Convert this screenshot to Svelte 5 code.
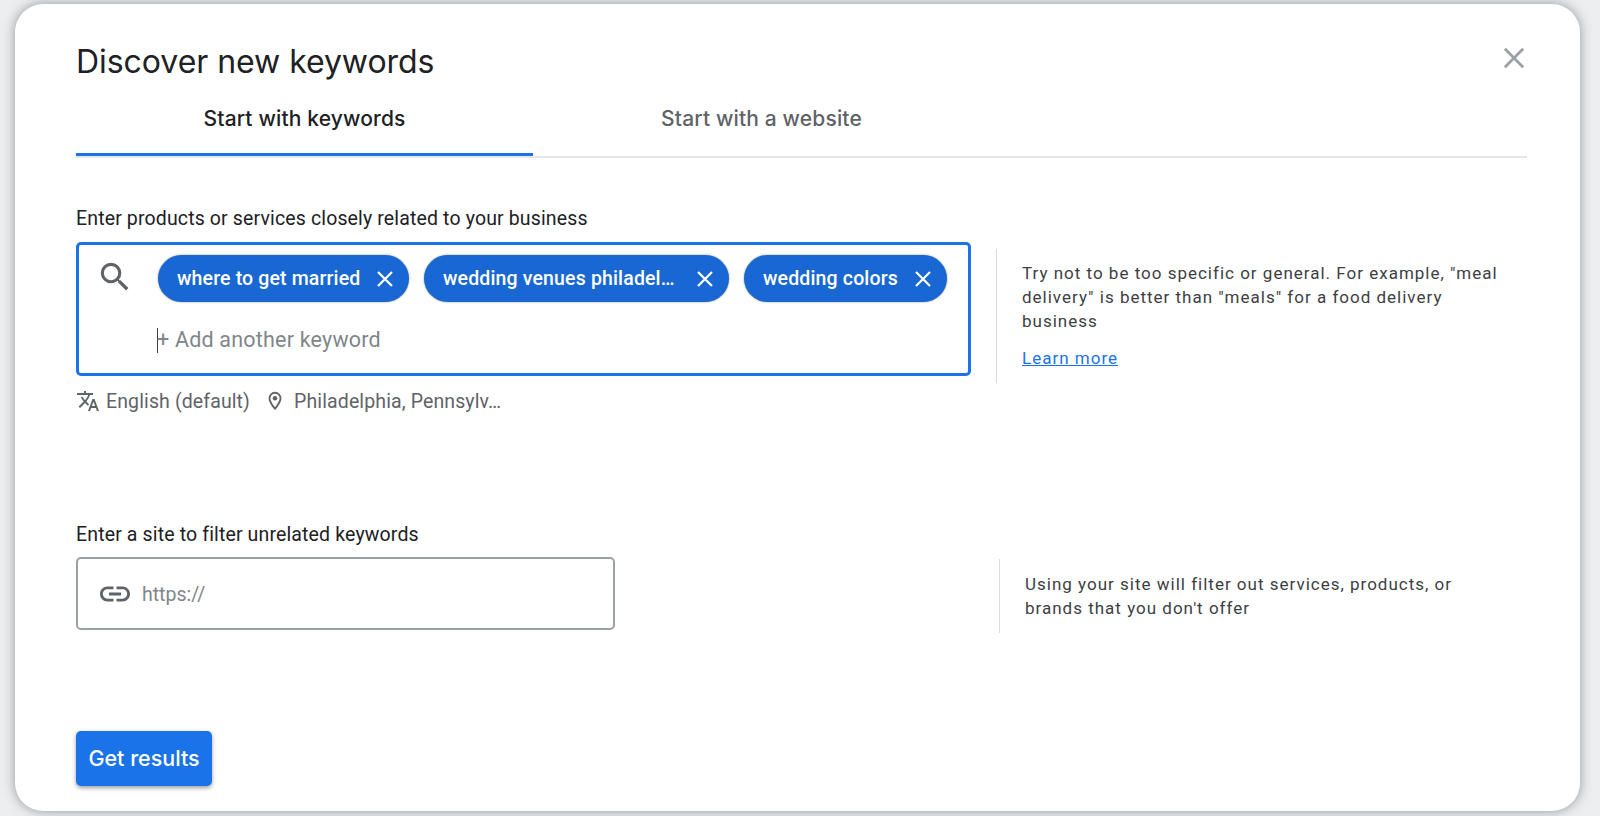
<script>
  const chips = [
    { label: 'where to get married', width: 251 },
    { label: 'wedding venues philadel…', width: 305 },
    { label: 'wedding colors', width: 203 }
  ];
</script>

<div class="page">
  <div class="card">
    <header class="head">
      <h1>Discover new keywords</h1>
      <svg class="close" viewBox="0 0 24 24" aria-label="Close">
        <path d="M2 2 22 22M22 2 2 22" />
      </svg>
    </header>

    <div class="tabs">
      <div class="tab active">Start with keywords</div>
      <div class="tab">Start with a website</div>
    </div>

    <section class="first">
      <div class="main">
        <div class="label">Enter products or services closely related to your business</div>
        <div class="kwbox">
          <svg class="search" viewBox="0 0 24 24">
            <path d="M15.5 14h-.79l-.28-.27A6.47 6.47 0 0 0 16 9.5 6.5 6.5 0 1 0 9.5 16c1.61 0 3.09-.59 4.23-1.57l.27.28v.79l5 4.99L20.49 19l-4.99-5zm-6 0C7.01 14 5 11.99 5 9.5S7.01 5 9.5 5 14 7.01 14 9.5 11.99 14 9.5 14z" />
          </svg>
          <div class="kwright">
            <div class="chips">
              {#each chips as chip}
                <div class="chip" style="width: {chip.width}px">
                  <span>{chip.label}</span>
                  <svg viewBox="0 0 18 18"><path d="M2 2 16 16M16 2 2 16" /></svg>
                </div>
              {/each}
            </div>
            <div class="add"><i></i>+ Add another keyword</div>
          </div>
        </div>
        <div class="meta">
          <svg class="translate" viewBox="0 0 24 24">
            <path d="M12.87 15.07l-2.54-2.51.03-.03A17.52 17.52 0 0 0 14.07 6H17V4h-7V2H8v2H1v1.99h11.17C11.5 7.92 10.44 9.75 9 11.35 8.07 10.32 7.3 9.19 6.69 8h-2c.73 1.63 1.73 3.17 2.98 4.56l-5.09 5.02L4 19l5-5 3.11 3.11.76-2.04zM18.5 10h-2L12 22h2l1.12-3h4.75L21 22h2l-4.5-12zm-2.62 7l1.62-4.33L19.12 17h-3.24z" />
          </svg>
          <span class="lang">English (default)</span>
          <svg class="pin" viewBox="0 0 24 24">
            <path d="M12 2a7 7 0 0 0-7 7c0 5.25 7 13 7 13s7-7.75 7-13a7 7 0 0 0-7-7zM7 9a5 5 0 0 1 10 0c0 2.88-2.88 7.19-5 9.88C9.92 16.21 7 11.85 7 9z" />
            <circle cx="12" cy="9" r="2.5" />
          </svg>
          <span>Philadelphia, Pennsylv…</span>
        </div>
      </div>
      <aside class="help">
        <p>Try not to be too specific or general. For example, "meal delivery" is better than "meals" for a food delivery business</p>
        <a href="#top">Learn more</a>
      </aside>
    </section>

    <section class="second">
      <div class="main">
        <div class="label">Enter a site to filter unrelated keywords</div>
        <div class="sitebox">
          <svg viewBox="0 0 24 24">
            <path d="M3.9 12c0-1.71 1.39-3.1 3.1-3.1h4V7H7c-2.76 0-5 2.24-5 5s2.24 5 5 5h4v-1.9H7c-1.71 0-3.1-1.39-3.1-3.1zM8 13h8v-2H8v2zm9-6h-4v1.9h4c1.71 0 3.1 1.39 3.1 3.1s-1.39 3.1-3.1 3.1h-4V17h4c2.76 0 5-2.24 5-5s-2.24-5-5-5z" />
          </svg>
          <span>https://</span>
        </div>
      </div>
      <aside class="help">
        <p>Using your site will filter out services, products, or brands that you don't offer</p>
      </aside>
    </section>

    <button class="go">Get results</button>
  </div>
</div>

<style>
:global(body) {
  margin: 0;
  background: #eceef0;
}

.page {
  height: 816px;
  padding: 4px 20px 5px 15px;
  box-sizing: border-box;
  overflow: hidden;
  font-family: Roboto, "Liberation Sans", sans-serif;
  color: #202124;
}

.card {
  height: 807px;
  box-sizing: border-box;
  padding: 38px 53px 0 61px;
  background: #fff;
  border-radius: 28px;
  box-shadow: 0 0 12px rgba(60, 64, 67, 0.5);
  display: flex;
  flex-direction: column;
}

.head {
  display: flex;
  justify-content: space-between;
  height: 40px;
}

h1 {
  margin: 0;
  font-family: Inter, Roboto, sans-serif;
  font-size: 32px;
  line-height: 40px;
  font-weight: 400;
  letter-spacing: -0.05px;
}

.close {
  width: 22px;
  height: 22px;
  margin: 5px 2px 0 0;
  fill: none;
  stroke: #9aa0a6;
  stroke-width: 3;
}

.tabs {
  display: flex;
  height: 76px;
  border-bottom: 2px solid #e4e6e8;
  box-sizing: border-box;
}

.tab {
  width: 457px;
  box-sizing: border-box;
  height: 74px;
  padding-top: 22px;
  text-align: center;
  font-family: Inter, Roboto, sans-serif;
  font-size: 21px;
  line-height: 30px;
  font-weight: 500;
  letter-spacing: 0.15px;
  color: #5f6368;
}

.tab.active {
  color: #202124;
  border-bottom: 3px solid #1a73e8;
}

.first {
  display: flex;
  margin-top: 48px;
  height: 316px;
}

.second {
  display: flex;
  height: 209px;
}

.main {
  display: flex;
  flex-direction: column;
  width: 895px;
}

.label {
  font-size: 19.5px;
  line-height: 26px;
  letter-spacing: 0.14px;
  color: #202124;
}

.kwbox {
  margin-top: 10px;
  width: 895px;
  height: 134px;
  box-sizing: border-box;
  border: 3px solid #1a73e8;
  border-radius: 5px;
  display: flex;
  padding: 10px 0 0 22px;
}

.search {
  width: 38px;
  height: 38px;
  margin: 3px 0 0 -5px;
  fill: #5f6368;
}

.kwright {
  margin-left: 24px;
}

.chips {
  display: flex;
  gap: 15px;
}

.chip {
  height: 47px;
  box-sizing: border-box;
  border-radius: 24px;
  background: #1967d2;
  box-shadow: 0 0 2px rgba(60, 64, 67, 0.6);
  color: #fff;
  display: flex;
  align-items: center;
  justify-content: space-between;
  padding: 0 15px 0 19px;
  font-size: 19.5px;
  font-weight: 500;
  letter-spacing: 0.15px;
}

.chip svg {
  width: 18px;
  height: 18px;
  fill: none;
  stroke: #fff;
  stroke-width: 2.2;
}

.add {
  margin: 18px 0 0 -1px;
  font-size: 21.5px;
  line-height: 40px;
  color: #80868b;
  letter-spacing: 0.2px;
}

.add i {
  display: inline-block;
  width: 1px;
  height: 25px;
  background: #3c4043;
  vertical-align: -6px;
  margin-right: -1px;
}

.meta {
  display: flex;
  align-items: center;
  margin-top: 12px;
  height: 26px;
  font-size: 19.5px;
  letter-spacing: 0.12px;
  color: #5f6368;
}

.translate {
  width: 24px;
  height: 24px;
  fill: #5f6368;
}

.lang {
  margin-left: 6px;
}

.pin {
  width: 22px;
  height: 22px;
  margin: 0 8px 0 14px;
  fill: #5f6368;
}

.help {
  border-left: 1px solid #dadce0;
  font-size: 17px;
  line-height: 24.2px;
  letter-spacing: 1px;
  color: #3c4043;
  box-sizing: border-box;
  width: 526px;
}

.first .help {
  margin: 43px 0 0 25px;
  height: 134px;
  padding: 12px 0 0 25px;
}

.second .help {
  margin: 37px 0 0 28px;
  height: 74px;
  padding: 13px 40px 0 25px;
}

.help p {
  margin: 0;
  max-width: 490px;
}

.help a {
  display: block;
  margin-top: 12px;
  color: #1a73e8;
  text-decoration: underline;
}

.sitebox {
  margin-top: 9px;
  width: 539px;
  height: 73px;
  box-sizing: border-box;
  border: 2px solid #9aa0a6;
  border-radius: 5px;
  display: flex;
  align-items: center;
  padding-left: 19px;
  font-size: 19.5px;
  color: #80868b;
}

.sitebox svg {
  width: 36px;
  height: 36px;
  fill: #5f6368;
  margin-right: 9px;
}

.sitebox span {
  margin-top: 2px;
}

.go {
  width: 136px;
  height: 55px;
  padding: 0 0 2px;
  border: 0;
  border-radius: 5px;
  background: #1a73e8;
  color: #fff;
  font-family: Inter, Roboto, sans-serif;
  font-size: 21.5px;
  font-weight: 500;
  box-shadow: 0 2px 4px rgba(60, 64, 67, 0.5);
}
</style>
